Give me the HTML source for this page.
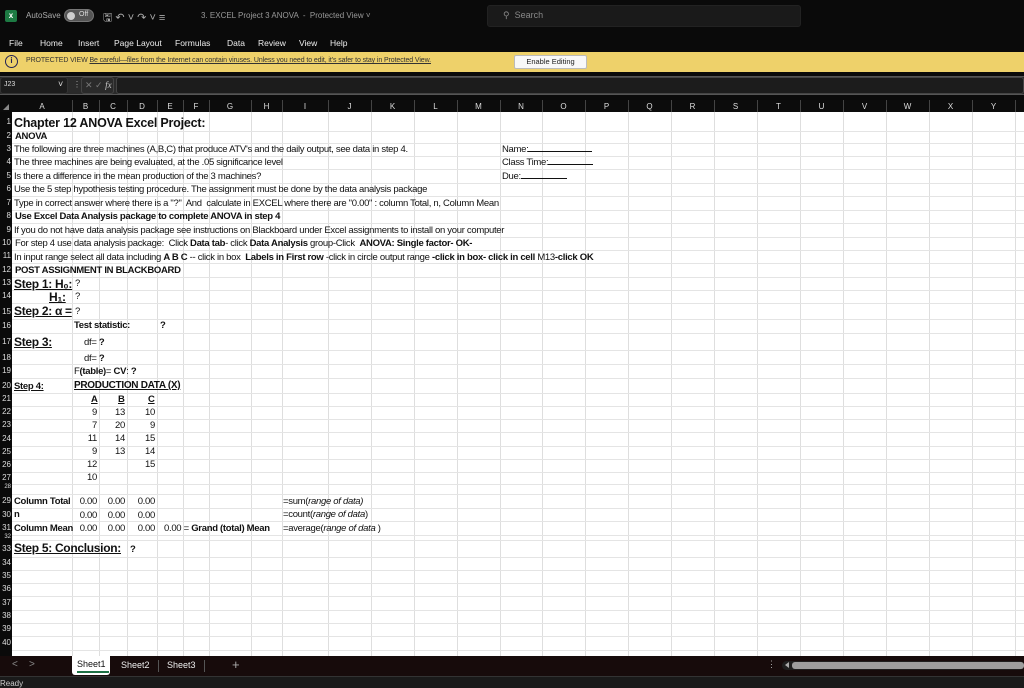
<!DOCTYPE html><html><head><meta charset="utf-8"><style>
*{margin:0;padding:0;box-sizing:border-box}
body{width:1024px;height:688px;overflow:hidden;background:#0a0a0a;font-family:"Liberation Sans",sans-serif;position:relative}
.a{position:absolute;white-space:nowrap}
.t{position:absolute;white-space:nowrap;font-size:9.5px;letter-spacing:-0.3px;color:#111;line-height:13px}
.b{font-weight:bold}
.vl{position:absolute;top:112px;height:544px;width:1px;background:#dedede}
.hl{position:absolute;left:12px;width:1012px;height:1px;background:#e4e4e4}
.rn{position:absolute;left:0;width:12px;color:#ddd;font-size:8px;text-align:right;padding-right:1px;line-height:10px}
.ch{position:absolute;top:101px;color:#ddd;font-size:8px;text-align:center;line-height:11px}
.cs{position:absolute;top:100px;width:1px;height:12px;background:#444}
.u{text-decoration:underline}
.st{font-size:12px;font-weight:bold;text-decoration:underline;letter-spacing:-0.3px}
.m{position:absolute;top:38px;color:#eee;font-size:8.5px}
</style></head><body>
<!-- title bar -->
<div class="a" style="left:5px;top:10px;width:12px;height:12px;background:#1d7a43;border-radius:2px;color:#fff;font-size:8px;font-weight:bold;text-align:center;line-height:12px">x</div>
<div class="a" style="left:26px;top:11px;color:#aaa;font-size:8px">AutoSave</div>
<div class="a" style="left:64px;top:9px;width:30px;height:13px;border-radius:7px;background:#555;border:1px solid #777"></div>
<div class="a" style="left:67px;top:12px;width:8px;height:8px;border-radius:4px;background:#ccc"></div>
<div class="a" style="left:79px;top:11px;color:#ddd;font-size:7px">Off</div>
<div class="a" style="left:103px;top:9px;color:#aaa;font-size:11px">🖫 ↶ ˅ ↷ ˅ ≡</div>
<div class="a" style="left:201px;top:11px;color:#999;font-size:8px">3. EXCEL Project 3 ANOVA &nbsp;-&nbsp; Protected View ˅</div>
<div class="a" style="left:487px;top:5px;width:314px;height:22px;background:#1a1a1a;border-radius:3px;border:1px solid #222"></div>
<div class="a" style="left:503px;top:10px;color:#888;font-size:9px">⚲ &nbsp;Search</div>
<!-- menu -->
<div class="m" style="left:9px">File</div><div class="m" style="left:40px">Home</div><div class="m" style="left:78px">Insert</div><div class="m" style="left:114px">Page Layout</div><div class="m" style="left:175px">Formulas</div><div class="m" style="left:227px">Data</div><div class="m" style="left:258px">Review</div><div class="m" style="left:299px">View</div><div class="m" style="left:330px">Help</div>
<!-- yellow -->
<div class="a" style="left:0;top:52px;width:1024px;height:20px;background:#eed16a"></div>
<div class="a" style="left:5px;top:55px;width:13px;height:13px;border:1.5px solid #225;border-radius:50%;color:#225;font-size:8px;text-align:center;line-height:10px;font-weight:bold">i</div>
<div class="a" style="left:26px;top:57px;color:#333;font-size:7px;letter-spacing:-0.1px">PROTECTED VIEW <span class="u">Be careful—files from the Internet can contain viruses. Unless you need to edit, it's safer to stay in Protected View.</span></div>
<div class="a" style="left:514px;top:55px;width:73px;height:14px;background:#f8f8f8;border:1px solid #bbb;border-radius:2px;color:#222;font-size:7.5px;text-align:center;line-height:12px">Enable Editing</div>
<!-- formula bar -->
<div class="a" style="left:0;top:76px;width:1024px;height:19px;background:#2a2a2a;border-top:1px solid #555;border-bottom:1px solid #555"></div>
<div class="a" style="left:0;top:77px;width:68px;height:17px;background:#1c1c1c;border-radius:3px;border:1px solid #333"></div>
<div class="a" style="left:4px;top:81px;color:#ddd;font-size:7px">J23</div>
<div class="a" style="left:58px;top:79px;color:#ddd;font-size:9px">˅</div>
<div class="a" style="left:73px;top:80px;color:#aaa;font-size:8px">⋮</div>
<div class="a" style="left:81px;top:77px;width:33px;height:17px;border:1px solid #444;border-radius:3px;color:#777;font-size:9px;line-height:15px;padding-left:3px">✕ ✓ <i style="color:#ccc;font-family:'Liberation Serif'">fx</i></div>
<div class="a" style="left:116px;top:77px;width:908px;height:17px;background:#1c1c1c;border:1px solid #444;border-radius:3px"></div>
<!-- sheet area -->
<div class="a" style="left:12px;top:112px;width:1012px;height:544px;background:#fff"></div>
<div class="vl" style="left:72px"></div><div class="vl" style="left:99px"></div><div class="vl" style="left:127px"></div><div class="vl" style="left:157px"></div><div class="vl" style="left:183px"></div><div class="vl" style="left:209px"></div><div class="vl" style="left:251px"></div><div class="vl" style="left:282px"></div><div class="vl" style="left:328px"></div><div class="vl" style="left:371px"></div><div class="vl" style="left:414px"></div><div class="vl" style="left:457px"></div><div class="vl" style="left:500px"></div><div class="vl" style="left:542px"></div><div class="vl" style="left:585px"></div><div class="vl" style="left:628px"></div><div class="vl" style="left:671px"></div><div class="vl" style="left:714px"></div><div class="vl" style="left:757px"></div><div class="vl" style="left:800px"></div><div class="vl" style="left:843px"></div><div class="vl" style="left:886px"></div><div class="vl" style="left:929px"></div><div class="vl" style="left:972px"></div><div class="vl" style="left:1015px"></div>
<div class="hl" style="top:131px"></div><div class="hl" style="top:143px"></div><div class="hl" style="top:156px"></div><div class="hl" style="top:169px"></div><div class="hl" style="top:183px"></div><div class="hl" style="top:196px"></div><div class="hl" style="top:210px"></div><div class="hl" style="top:223px"></div><div class="hl" style="top:237px"></div><div class="hl" style="top:250px"></div><div class="hl" style="top:263px"></div><div class="hl" style="top:277px"></div><div class="hl" style="top:290px"></div><div class="hl" style="top:303px"></div><div class="hl" style="top:319px"></div><div class="hl" style="top:333px"></div><div class="hl" style="top:350px"></div><div class="hl" style="top:364px"></div><div class="hl" style="top:378px"></div><div class="hl" style="top:393px"></div><div class="hl" style="top:406px"></div><div class="hl" style="top:419px"></div><div class="hl" style="top:432px"></div><div class="hl" style="top:446px"></div><div class="hl" style="top:459px"></div><div class="hl" style="top:472px"></div><div class="hl" style="top:484px"></div><div class="hl" style="top:494px"></div><div class="hl" style="top:508px"></div><div class="hl" style="top:521px"></div><div class="hl" style="top:535px"></div><div class="hl" style="top:540px"></div><div class="hl" style="top:557px"></div><div class="hl" style="top:570px"></div><div class="hl" style="top:583px"></div><div class="hl" style="top:596px"></div><div class="hl" style="top:610px"></div><div class="hl" style="top:623px"></div><div class="hl" style="top:636px"></div><div class="hl" style="top:650px"></div>
<!-- column headers -->
<div class="a" style="left:0;top:100px;width:1024px;height:12px;background:#0c0c0c"></div>
<div class="ch" style="left:12px;width:60px">A</div><div class="ch" style="left:72px;width:27px">B</div><div class="ch" style="left:99px;width:28px">C</div><div class="ch" style="left:127px;width:30px">D</div><div class="ch" style="left:157px;width:26px">E</div><div class="ch" style="left:183px;width:26px">F</div><div class="ch" style="left:209px;width:42px">G</div><div class="ch" style="left:251px;width:31px">H</div><div class="ch" style="left:282px;width:46px">I</div><div class="ch" style="left:328px;width:43px">J</div><div class="ch" style="left:371px;width:43px">K</div><div class="ch" style="left:414px;width:43px">L</div><div class="ch" style="left:457px;width:43px">M</div><div class="ch" style="left:500px;width:42px">N</div><div class="ch" style="left:542px;width:43px">O</div><div class="ch" style="left:585px;width:43px">P</div><div class="ch" style="left:628px;width:43px">Q</div><div class="ch" style="left:671px;width:43px">R</div><div class="ch" style="left:714px;width:43px">S</div><div class="ch" style="left:757px;width:43px">T</div><div class="ch" style="left:800px;width:43px">U</div><div class="ch" style="left:843px;width:43px">V</div><div class="ch" style="left:886px;width:43px">W</div><div class="ch" style="left:929px;width:43px">X</div><div class="ch" style="left:972px;width:43px">Y</div>
<div class="cs" style="left:72px"></div><div class="cs" style="left:99px"></div><div class="cs" style="left:127px"></div><div class="cs" style="left:157px"></div><div class="cs" style="left:183px"></div><div class="cs" style="left:209px"></div><div class="cs" style="left:251px"></div><div class="cs" style="left:282px"></div><div class="cs" style="left:328px"></div><div class="cs" style="left:371px"></div><div class="cs" style="left:414px"></div><div class="cs" style="left:457px"></div><div class="cs" style="left:500px"></div><div class="cs" style="left:542px"></div><div class="cs" style="left:585px"></div><div class="cs" style="left:628px"></div><div class="cs" style="left:671px"></div><div class="cs" style="left:714px"></div><div class="cs" style="left:757px"></div><div class="cs" style="left:800px"></div><div class="cs" style="left:843px"></div><div class="cs" style="left:886px"></div><div class="cs" style="left:929px"></div><div class="cs" style="left:972px"></div><div class="cs" style="left:1015px"></div>
<div class="a" style="left:3px;top:104px;width:0;height:0;border-left:6px solid transparent;border-bottom:6px solid #888"></div>
<!-- row numbers -->
<div class="rn" style="top:117px">1</div><div class="rn" style="top:131px">2</div><div class="rn" style="top:144px">3</div><div class="rn" style="top:157px">4</div><div class="rn" style="top:171px">5</div><div class="rn" style="top:184px">6</div><div class="rn" style="top:198px">7</div><div class="rn" style="top:211px">8</div><div class="rn" style="top:225px">9</div><div class="rn" style="top:238px">10</div><div class="rn" style="top:251px">11</div><div class="rn" style="top:265px">12</div><div class="rn" style="top:278px">13</div><div class="rn" style="top:291px">14</div><div class="rn" style="top:307px">15</div><div class="rn" style="top:321px">16</div><div class="rn" style="top:337px">17</div><div class="rn" style="top:353px">18</div><div class="rn" style="top:366px">19</div><div class="rn" style="top:381px">20</div><div class="rn" style="top:394px">21</div><div class="rn" style="top:407px">22</div><div class="rn" style="top:420px">23</div><div class="rn" style="top:434px">24</div><div class="rn" style="top:447px">25</div><div class="rn" style="top:460px">26</div><div class="rn" style="top:473px">27</div><div class="rn" style="top:484px;font-size:6px;line-height:6px">28</div><div class="rn" style="top:496px">29</div><div class="rn" style="top:510px">30</div><div class="rn" style="top:523px">31</div><div class="rn" style="top:534px;font-size:6px;line-height:6px">32</div><div class="rn" style="top:544px">33</div><div class="rn" style="top:558px">34</div><div class="rn" style="top:571px">35</div><div class="rn" style="top:584px">36</div><div class="rn" style="top:598px">37</div><div class="rn" style="top:611px">38</div><div class="rn" style="top:624px">39</div><div class="rn" style="top:638px">40</div>
<!-- content -->
<div class="t b" style="left:14px;top:115px;font-size:12.5px;letter-spacing:-0.2px;line-height:16px">Chapter 12 ANOVA Excel Project:</div>
<div class="t b" style="left:15px;top:130px">ANOVA</div>
<div class="t" style="left:14px;top:143px">The following are three machines (A,B,C) that produce ATV's and the daily output, see data in step 4.</div>
<div class="t" style="left:14px;top:156px">The three machines are being evaluated, at the .05 significance level</div>
<div class="t" style="left:14px;top:170px">Is there a difference in the mean production of the 3 machines?</div>
<div class="t" style="left:14px;top:183px">Use the 5 step hypothesis testing procedure. The assignment must be done by the data analysis package</div>
<div class="t" style="left:14px;top:197px">Type in correct answer where there is a "?"&nbsp; And&nbsp; calculate in EXCEL where there are "0.00" : column Total, n, Column Mean</div>
<div class="t b" style="left:15px;top:210px">Use Excel Data Analysis package to complete ANOVA in step 4</div>
<div class="t" style="left:14px;top:224px">If you do not have data analysis package see instructions on Blackboard under Excel assignments to install on your computer</div>
<div class="t" style="left:15px;top:237px">For step 4 use data analysis package:&nbsp; Click <b>Data tab</b>- click <b>Data Analysis</b> group-Click&nbsp; <b>ANOVA: Single factor- OK-</b></div>
<div class="t" style="left:14px;top:251px">In input range select all data including <b>A B C</b> -- click in box&nbsp; <b>Labels in First row</b> -click in circle output range <b>-click in box- click in cell</b> M13<b>-click OK</b></div>
<div class="t b" style="left:15px;top:264px">POST ASSIGNMENT IN BLACKBOARD</div>
<div class="t" style="left:502px;top:143px">Name:<span style="display:inline-block;width:64px;border-bottom:1px solid #111;height:9px"></span></div>
<div class="t" style="left:502px;top:156px">Class Time:<span style="display:inline-block;width:45px;border-bottom:1px solid #111;height:9px"></span></div>
<div class="t" style="left:502px;top:170px">Due:<span style="display:inline-block;width:46px;border-bottom:1px solid #111;height:9px"></span></div>
<div class="t st" style="left:14px;top:277px;line-height:14px">Step 1: H₀:</div><div class="t" style="left:75px;top:277px">?</div>
<div class="t st" style="left:49px;top:290px;line-height:14px">H₁:</div><div class="t" style="left:75px;top:290px">?</div>
<div class="t st" style="left:14px;top:304px;line-height:15px">Step 2: α =</div><div class="t" style="left:75px;top:305px">?</div>
<div class="t b" style="left:74px;top:319px">Test statistic:</div><div class="t b" style="left:160px;top:319px">?</div>
<div class="t st" style="left:14px;top:335px;line-height:15px">Step 3:</div><div class="t" style="left:84px;top:336px">df= <b>?</b></div>
<div class="t" style="left:84px;top:352px">df= <b>?</b></div>
<div class="t" style="left:74px;top:365px">F<b>(table)</b>= <b>CV</b>: <b>?</b></div>
<div class="t b u" style="left:14px;top:380px">Step 4:</div>
<div class="t b u" style="left:74px;top:379px;font-size:10px">PRODUCTION DATA (X)</div>
<div class="t b u" style="left:91px;top:393px">A</div><div class="t b u" style="left:118px;top:393px">B</div><div class="t b u" style="left:148px;top:393px">C</div>
<div class="t" style="left:72px;width:25px;text-align:right;top:406px;line-height:13px">9<br>7<br>11<br>9<br>12<br>10</div>
<div class="t" style="left:99px;width:26px;text-align:right;top:406px;line-height:13px">13<br>20<br>14<br>13</div>
<div class="t" style="left:127px;width:28px;text-align:right;top:406px;line-height:13px">10<br>9<br>15<br>14<br>15</div>
<div class="t b" style="left:14px;top:495px">Column Total</div>
<div class="t b" style="left:14px;top:508px">n</div>
<div class="t b" style="left:14px;top:522px">Column Mean</div>
<div class="t" style="left:72px;width:25px;text-align:right;top:495px;line-height:13.5px">0.00<br>0.00<br>0.00</div>
<div class="t" style="left:99px;width:26px;text-align:right;top:495px;line-height:13.5px">0.00<br>0.00<br>0.00</div>
<div class="t" style="left:127px;width:28px;text-align:right;top:495px;line-height:13.5px">0.00<br>0.00<br>0.00</div>
<div class="t" style="left:164px;top:522px">0.00 = <b>Grand (total) Mean</b></div>
<div class="t" style="left:283px;top:495px">=sum(<i>range of data)</i></div>
<div class="t" style="left:283px;top:508px">=count(<i>range of data</i>)</div>
<div class="t" style="left:283px;top:522px">=average(<i>range of data</i> )</div>
<div class="t st" style="left:14px;top:541px;line-height:15px">Step 5: Conclusion:</div><div class="t b" style="left:130px;top:543px">?</div>
<!-- tabs -->
<div class="a" style="left:0;top:656px;width:1024px;height:20px;background:#170b0b"></div>
<div class="a" style="left:12px;top:659px;color:#888;font-size:10px">&lt;&nbsp;&nbsp;&nbsp;&nbsp;&gt;</div>
<div class="a" style="left:72px;top:656px;width:38px;height:19px;background:#fff;border-radius:0 0 3px 3px"></div>
<div class="a" style="left:77px;top:659px;color:#111;font-size:9px">Sheet1</div>
<div class="a" style="left:77px;top:671px;width:32px;height:2px;background:#1e7145"></div>
<div class="a" style="left:121px;top:660px;color:#eee;font-size:9px">Sheet2</div>
<div class="a" style="left:158px;top:660px;width:1px;height:12px;background:#555"></div>
<div class="a" style="left:167px;top:660px;color:#eee;font-size:9px">Sheet3</div>
<div class="a" style="left:204px;top:660px;width:1px;height:12px;background:#555"></div>
<div class="a" style="left:232px;top:657px;color:#aaa;font-size:13px">+</div>
<div class="a" style="left:767px;top:659px;color:#aaa;font-size:9px">⋮</div>
<div class="a" style="left:782px;top:661px;width:242px;height:9px;background:#1f1f1f;border-radius:5px"></div>
<div class="a" style="left:785px;top:662px;width:0;height:0;border-top:3.5px solid transparent;border-bottom:3.5px solid transparent;border-right:4px solid #aaa"></div>
<div class="a" style="left:792px;top:662px;width:232px;height:7px;background:#9e9e9e;border-radius:3px"></div>
<div class="a" style="left:0;top:676px;width:1024px;height:12px;background:#1a1a1a;border-top:1px solid #333"></div>
<div class="a" style="left:0;top:679px;color:#ccc;font-size:8px">Ready</div>
</body></html>
